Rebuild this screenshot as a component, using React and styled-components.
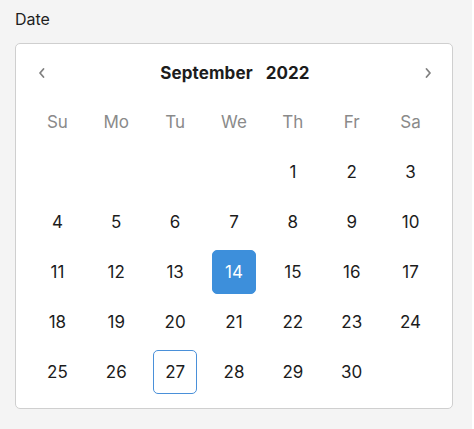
import React from "react";
import styled, { createGlobalStyle, css } from "styled-components";

const Global = createGlobalStyle`
  html, body { margin: 0; padding: 0; background: #ffffff; }
  body { font-family: Inter, "Noto Sans", "Liberation Sans", sans-serif; }
`;

const Page = styled.div`
  width: 472px;
  height: 429px;
  background: #f4f4f4;
  padding: 9px 0 0 15px;
  box-sizing: border-box;
`;

const Label = styled.div`
  font-size: 16px;
  color: #1f1f1f;
  line-height: 20px;
  margin-bottom: 14px;
`;

const Card = styled.div`
  width: 438px;
  box-sizing: border-box;
  background: #ffffff;
  border: 1px solid #cfcfcf;
  border-radius: 5px;
  padding: 13px 12px 11px;
`;

const Header = styled.div`
  height: 32px;
  display: flex;
  align-items: center;
  justify-content: space-between;
  padding: 0 0 0 0;
  margin-bottom: 8px;
`;

const NavButton = styled.button`
  width: 28px;
  height: 28px;
  border: none;
  background: none;
  padding: 0;
  display: flex;
  align-items: center;
  justify-content: center;
  color: #808080;
  cursor: pointer;
  margin-right: ${(p) => (p.$side === "right" ? "-2px" : "0")};
`;

const Title = styled.div`
  display: flex;
  gap: 13px;
  font-size: 17px;
  font-weight: 700;
  color: #1c1c1c;
  letter-spacing: 0.1px;
`;

const Grid = styled.div`
  display: grid;
  grid-template-columns: repeat(7, 1fr);
  grid-auto-rows: 50px;
`;

const Weekday = styled.div`
  display: flex;
  align-items: center;
  justify-content: center;
  font-size: 17px;
  color: #8a8a8a;
`;

const Cell = styled.div`
  display: flex;
  align-items: center;
  justify-content: center;
`;

const Day = styled.div`
  width: 44px;
  height: 44px;
  box-sizing: border-box;
  border-radius: 5px;
  display: flex;
  align-items: center;
  justify-content: center;
  font-size: 17px;
  color: #1c1c1c;
  border: 1px solid transparent;
  ${(p) =>
    p.$selected &&
    css`
      background: #3d8fdb;
      border-color: #3d8fdb;
      color: #ffffff;
    `}
  ${(p) =>
    p.$today &&
    css`
      border-color: #4a90d9;
    `}
`;

const Chevron = ({ dir }) => (
  <svg width="8" height="12" viewBox="0 0 8 12" fill="none">
    <path
      d={dir === "left" ? "M5.5 2 L2 6 L5.5 10" : "M2.5 2 L6 6 L2.5 10"}
      stroke="currentColor"
      strokeWidth="1.8"
      strokeLinecap="round"
      strokeLinejoin="round"
    />
  </svg>
);

export default function App() {
  const weekdays = ["Su", "Mo", "Tu", "We", "Th", "Fr", "Sa"];
  const cells = [];
  for (let i = 0; i < 4; i++) cells.push(null);
  for (let d = 1; d <= 30; d++) cells.push(d);
  return (
    <>
      <Global />
      <Page>
        <Label>Date</Label>
        <Card>
          <Header>
            <NavButton aria-label="Previous month">
              <Chevron dir="left" />
            </NavButton>
            <Title>
              <span>September</span>
              <span>2022</span>
            </Title>
            <NavButton aria-label="Next month" $side="right">
              <Chevron dir="right" />
            </NavButton>
          </Header>
          <Grid>
            {weekdays.map((w) => (
              <Weekday key={w}>{w}</Weekday>
            ))}
            {cells.map((d, i) => (
              <Cell key={i}>
                {d && (
                  <Day $selected={d === 14} $today={d === 27}>
                    {d}
                  </Day>
                )}
              </Cell>
            ))}
          </Grid>
        </Card>
      </Page>
    </>
  );
}
